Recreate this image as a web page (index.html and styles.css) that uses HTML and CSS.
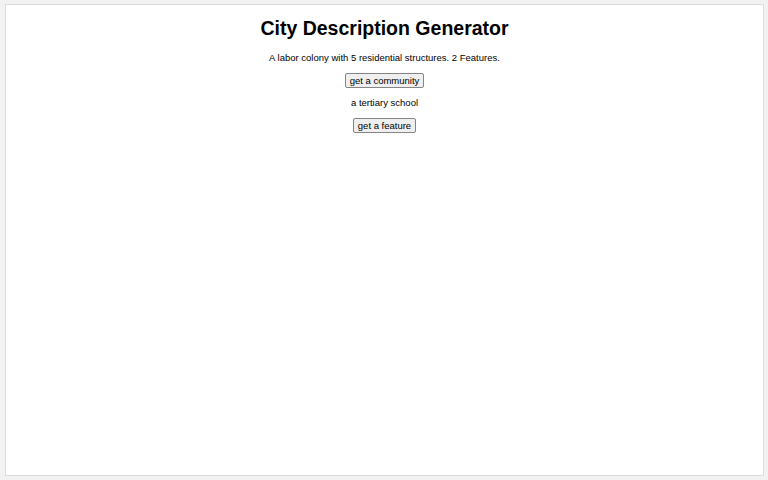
FILE: index.html
```html
<!DOCTYPE html>
<html lang="en">
<head>
<meta charset="utf-8">
<title>City Description Generator</title>
<link rel="stylesheet" href="styles.css">
</head>
<body>
<main class="page">
  <h1 class="title">City Description Generator</h1>
  <p class="line">A labor colony with 5 residential structures. 2 Features.</p>
  <div class="action"><button class="btn" type="button">get a community</button></div>
  <p class="line">a tertiary school</p>
  <div class="action"><button class="btn" type="button">get a feature</button></div>
</main>
</body>
</html>
```
FILE: styles.css
```css
html, body {
  margin: 0;
  height: 100%;
}
body {
  background: #f2f2f2;
  padding: 4px 4px 4px 5px;
  box-sizing: border-box;
  font-family: "Liberation Sans", Arial, sans-serif;
  color: #000;
}
.page {
  background: #fff;
  border: 1px solid #dcdcdc;
  height: 100%;
  box-sizing: border-box;
  display: flex;
  flex-direction: column;
  align-items: center;
  padding-top: 11px;
}
.title {
  margin: 0 0 12px;
  font-size: 19.5px;
  font-weight: bold;
  line-height: 24px;
}
.line {
  margin: 0 0 9px;
  font-size: 9.5px;
  line-height: 12px;
}
.action {
  display: flex;
  justify-content: center;
  margin: 0 0 9px;
}
.btn {
  font-family: "Liberation Sans", Arial, sans-serif;
  font-size: 9.5px;
  line-height: 11px;
  height: 15px;
  padding: 1px 4px;
  background: #efefef;
  border: 1px solid #858585;
  border-radius: 2px;
  color: #000;
}
```
